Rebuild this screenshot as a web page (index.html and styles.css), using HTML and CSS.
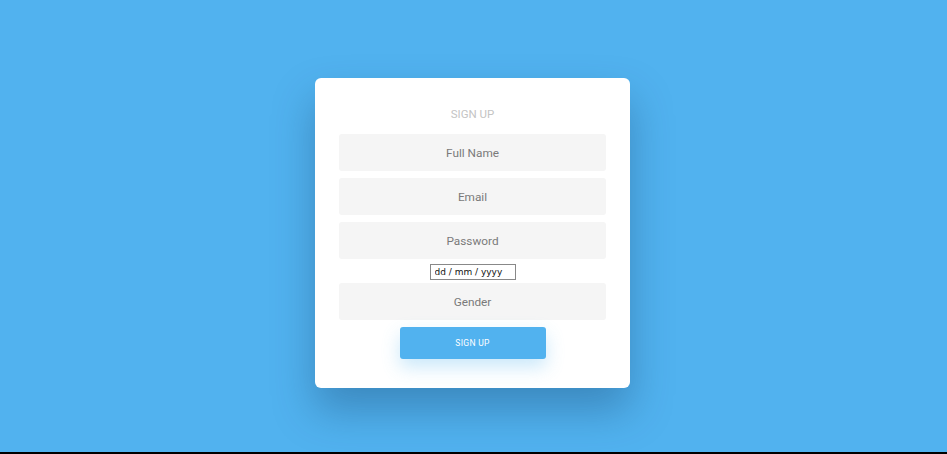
FILE: index.html
```html
<!DOCTYPE html>
<html>
<head>
<meta charset="utf-8">
<link rel="stylesheet" href="styles.css">
</head>
<body>
<div class="page">
  <form class="card">
    <h2 class="title">SIGN UP</h2>
    <input class="field" type="text" placeholder="Full Name">
    <input class="field" type="text" placeholder="Email">
    <input class="field" type="password" placeholder="Password">
    <input class="date" type="text" placeholder="dd / mm / yyyy">
    <input class="field" type="text" placeholder="Gender">
    <button class="btn" type="button">SIGN UP</button>
  </form>
</div>
<div class="bottom"></div>
</body>
</html>
```

FILE: styles.css
```css
html, body {
  margin: 0;
  padding: 0;
  background: #000;
}
.page {
  height: 452px;
  background: #51b2ef;
  display: flex;
  justify-content: center;
  align-items: flex-start;
  padding-top: 78px;
  padding-right: 2px;
  box-sizing: border-box;
  font-family: Roboto, "Noto Sans", sans-serif;
}
.card {
  width: 315px;
  height: 310px;
  box-sizing: border-box;
  background: #fff;
  border-radius: 6px;
  padding: 0 24px;
  display: flex;
  flex-direction: column;
  align-items: center;
  box-shadow: 0 22px 42px rgba(20, 60, 100, 0.35);
}
.title {
  margin: 27px 0 0;
  height: 29px;
  line-height: 18px;
  font-size: 11.5px;
  font-weight: 400;
  color: #c4c4c4;
  letter-spacing: 0;
}
.field {
  width: 100%;
  height: 37px;
  box-sizing: border-box;
  border: none;
  border-radius: 3px;
  background: #f5f5f5;
  text-align: center;
  font-family: Roboto, "Noto Sans", sans-serif;
  font-size: 11.8px;
  margin: 0 0 7px;
  outline: none;
}
.field::placeholder {
  color: #7a7a7a;
}
.date {
  width: 86px;
  height: 16px;
  box-sizing: border-box;
  margin: -2px 0 3px;
  padding: 0 4px;
  border: 1px solid #888;
  font-family: "DejaVu Sans", sans-serif;
  font-size: 9px;
  color: #000;
  outline: none;
}
.date::placeholder {
  color: #111;
}
.btn {
  width: 146px;
  height: 32px;
  border: none;
  border-radius: 3px;
  background: #51b2ef;
  color: #fff;
  font-family: Roboto, "Noto Sans", sans-serif;
  font-size: 8.5px;
  letter-spacing: 0.3px;
  box-shadow: 0 8px 18px rgba(81, 178, 239, 0.3);
}
.bottom {
  height: 2px;
  background: #000;
}
```
